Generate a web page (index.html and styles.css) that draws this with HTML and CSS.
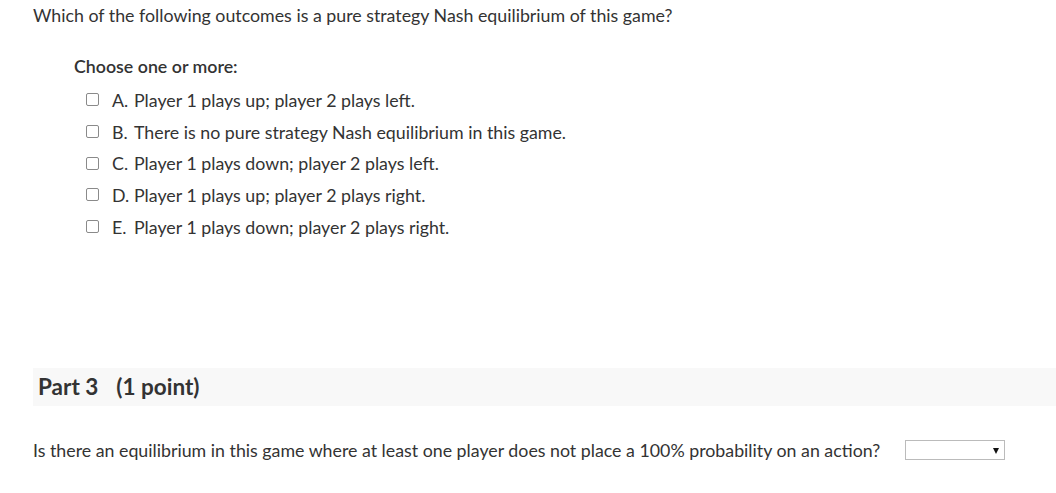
FILE: index.html
```html
<!DOCTYPE html>
<html>
<head>
<meta charset="utf-8">
<link rel="stylesheet" href="styles.css">
</head>
<body>
<div class="page">
  <p class="question">Which of the following outcomes is a pure strategy Nash equilibrium of this game?</p>
  <div class="answers">
    <div class="prompt">Choose one or more:</div>
    <div class="option"><span class="box"></span><span class="letter">A.</span><span>Player 1 plays up; player 2 plays left.</span></div>
    <div class="option"><span class="box"></span><span class="letter">B.</span><span>There is no pure strategy Nash equilibrium in this game.</span></div>
    <div class="option"><span class="box"></span><span class="letter">C.</span><span>Player 1 plays down; player 2 plays left.</span></div>
    <div class="option"><span class="box"></span><span class="letter">D.</span><span>Player 1 plays up; player 2 plays right.</span></div>
    <div class="option"><span class="box"></span><span class="letter">E.</span><span>Player 1 plays down; player 2 plays right.</span></div>
  </div>
  <div class="part"><span class="part-num">Part 3</span><span>(1 point)</span></div>
  <div class="q3">
    <span>Is there an equilibrium in this game where at least one player does not place a 100% probability on an action?</span>
    <span class="select"><span class="arrow"></span></span>
  </div>
</div>
</body>
</html>
```
FILE: styles.css
```css
html, body {
  margin: 0;
  padding: 0;
  background: #fff;
}
body {
  font-family: Lato, "Open Sans", sans-serif;
  color: #333333;
  font-size: 17.8px;
}
.page {
  padding-left: 33px;
}
.question {
  margin: 0;
  padding-top: 4px;
  line-height: 22px;
}
.answers {
  padding-left: 41px;
  padding-top: 29px;
}
.prompt {
  font-weight: 600;
  line-height: 22px;
  margin-bottom: 7px;
}
.option {
  display: flex;
  align-items: center;
  height: 31.7px;
  line-height: 22px;
}
.box {
  width: 11px;
  height: 11px;
  border: 1px solid #8a8a8a;
  border-radius: 2px;
  margin-left: 12px;
  margin-right: 13px;
  box-sizing: content-box;
}
.letter {
  width: 22px;
}
.part {
  margin-top: 125.5px;
  background: #f8f8f8;
  height: 38px;
  line-height: 38px;
  font-size: 22.5px;
  font-weight: 700;
  padding-left: 5px;
  display: flex;
}
.part-num {
  margin-right: 18px;
}
.q3 {
  margin-top: 33px;
  display: flex;
  align-items: center;
  line-height: 22px;
}
.select {
  margin-left: 25px;
  width: 98px;
  height: 18px;
  border: 1px solid #bbbbbb;
  display: flex;
  align-items: center;
  justify-content: flex-end;
}
.arrow {
  width: 0;
  height: 0;
  border-left: 3.5px solid transparent;
  border-right: 3.5px solid transparent;
  border-top: 6px solid #111;
  margin-right: 5px;
  margin-top: 2px;
}
```
